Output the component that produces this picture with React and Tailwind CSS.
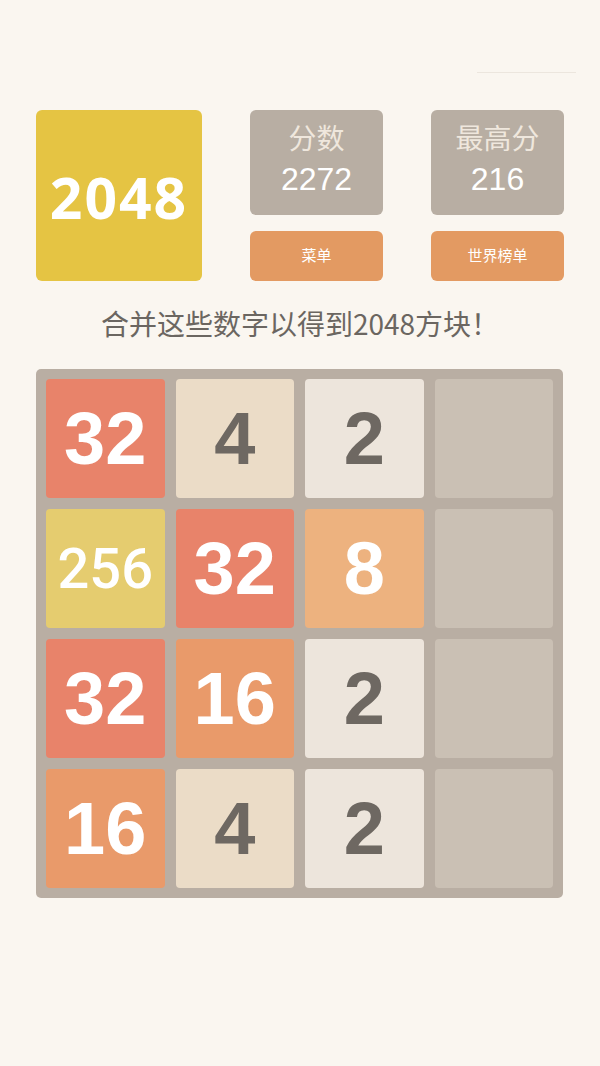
import React from 'react';

// ── Tile styles ───────────────────────────────────────────────────────────────
const TILE = {
  0:   'bg-[#cac0b4]',
  2:   'bg-[#ede5dc] text-[#6e6862]',
  4:   'bg-[#ebdcc7] text-[#6e6862]',
  8:   'bg-[#edb27f] text-white',
  16:  'bg-[#e99a6a] text-white',
  32:  'bg-[#e8836a] text-white',
  256: 'bg-[#e5cc6f] text-white',
};

const board = [
  [32, 4, 2, 0],
  [256, 32, 8, 0],
  [32, 16, 2, 0],
  [16, 4, 2, 0],
];

const Tile = ({ value }) => {
  const size = value >= 100
    ? 'text-[56px] font-medium font-[Roboto,sans-serif]'
    : 'text-[74px] font-bold';
  return (
    <div className={`h-[119px] rounded-[4px] flex items-center justify-center ${TILE[value]}`}>
      {value > 0 && <span className={`${size} leading-none`}>{value}</span>}
    </div>
  );
};

const ScoreBox = ({ label, value }) => (
  <div className="h-[105px] rounded-[6px] bg-[#b8aea3] flex flex-col items-center pt-[13px]">
    <span className="text-[28px] leading-[34px] text-[#efe7dd]">{label}</span>
    <span className="text-[32px] leading-[38px] text-white mt-[3px]">{value}</span>
  </div>
);

const ButtonBox = ({ label }) => (
  <div className="h-[50px] rounded-[6px] bg-[#e39a62] flex items-center justify-center text-[15px] text-white">
    {label}
  </div>
);

export default function App() {
  return (
    <div
      className="w-[600px] h-[1066px] bg-[#faf6f0] overflow-hidden"
      style={{ fontFamily: '"Liberation Sans", "Noto Sans CJK SC", sans-serif' }}
    >
      {/* top rule */}
      <div className="flex justify-end pr-[24px] pt-[72px]">
        <div className="w-[99px] h-px bg-[#ece6de]" />
      </div>

      {/* header */}
      <div className="flex pl-[36px] pt-[37px] gap-[48px]">
        <div className="w-[166px] h-[171px] rounded-[6px] bg-[#e5c443] flex items-center justify-center">
          <span className="text-[57px] font-bold text-white leading-none mt-[4px] tracking-[2px] font-['Noto_Sans',sans-serif]">2048</span>
        </div>
        <div className="w-[133px] flex flex-col gap-[16px]">
          <ScoreBox label="分数" value="2272" />
          <ButtonBox label="菜单" />
        </div>
        <div className="w-[133px] flex flex-col gap-[16px]">
          <ScoreBox label="最高分" value="216" />
          <ButtonBox label="世界榜单" />
        </div>
      </div>

      {/* tagline */}
      <p className="text-center text-[28px] text-[#6b6661] mt-[24px] leading-[36px] font-['Noto_Sans_CJK_SC',sans-serif]">
        合并这些数字以得到2048方块！
      </p>

      {/* board */}
      <div className="ml-[36px] mt-[28px] w-[527px] bg-[#b9aea3] rounded-[5px] p-[10px] grid grid-cols-4 gap-[11px]">
        {board.flat().map((v, i) => (
          <Tile key={i} value={v} />
        ))}
      </div>
    </div>
  );
}
